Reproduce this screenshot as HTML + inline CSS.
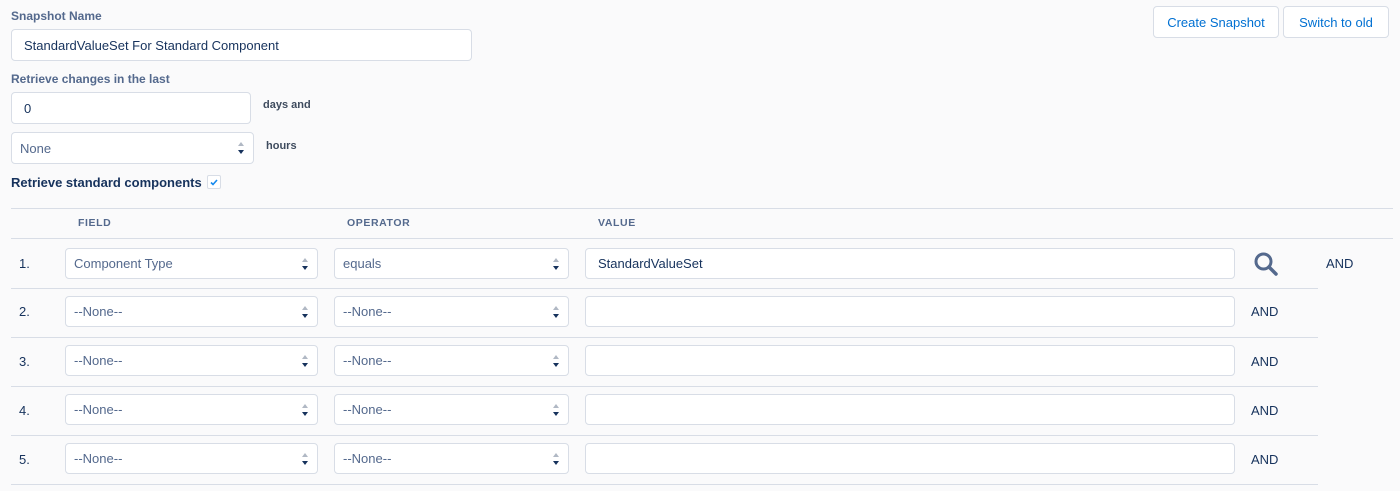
<!DOCTYPE html>
<html><head><style>
body{margin:0;width:1400px;height:491px;background:#fafafb;font-family:"Liberation Sans",sans-serif;color:#16325c;position:relative;overflow:hidden}
.a{position:absolute}
.lbl{font-size:12px;color:#54698d;font-weight:bold}
.inp{position:absolute;background:#fff;border:1px solid #d8dde6;border-radius:4px;box-sizing:border-box;font-size:13px;display:flex;align-items:center;padding-left:12px;color:#16325c}
.sel{color:#54698d;padding-left:8px}
.arr{position:absolute;right:8px;top:50%;margin-top:-7px;width:7px;height:14px}
.arr:before{content:"";position:absolute;left:0;top:1px;border:3.5px solid transparent;border-bottom:4px solid #b0b8c4;border-top:0}
.arr:after{content:"";position:absolute;left:0;top:9px;border:3.5px solid transparent;border-top:4px solid #16325c;border-bottom:0}
.btn{position:absolute;background:#fff;border:1px solid #d8dde6;border-radius:4px;box-sizing:border-box;font-size:13px;color:#0070d2;display:flex;align-items:center;justify-content:center;height:32px;top:6px}
.line{position:absolute;height:1px;background:#d8dde6;left:11px}
.th{position:absolute;top:217px;font-size:10.5px;font-weight:bold;letter-spacing:0.6px;color:#54698d}
.num{position:absolute;left:19px;font-size:13px}
.and{position:absolute;font-size:13px;color:#16325c}
</style></head><body>
<div class="a lbl" style="left:11px;top:9px">Snapshot Name</div>
<div class="inp" style="left:11px;top:29px;width:461px;height:32px">StandardValueSet For Standard Component</div>
<div class="a lbl" style="left:11px;top:72px">Retrieve changes in the last</div>
<div class="inp" style="left:11px;top:92px;width:240px;height:32px">0</div>
<div class="a" style="left:263px;top:99px;font-size:11px;font-weight:bold;color:#3e4b5e">days and</div>
<div class="inp sel" style="left:11px;top:132px;width:243px;height:32px">None<span class="arr"></span></div>
<div class="a" style="left:266px;top:140px;font-size:11px;font-weight:bold;color:#3e4b5e">hours</div>
<div class="a" style="left:11px;top:175px;font-size:13px;font-weight:bold;color:#16325c">Retrieve standard components</div>
<div class="a" style="left:207px;top:175px;width:14px;height:14px;border:1px solid #d8dde6;border-radius:2px;background:#fff;box-sizing:border-box"><svg width="12" height="12" viewBox="0 0 12 12" style="position:absolute;left:0;top:0"><path d="M3 6.5l2 2 4-4.5" stroke="#1589ee" stroke-width="1.6" fill="none"/></svg></div>
<div class="btn" style="left:1153px;width:126px">Create Snapshot</div>
<div class="btn" style="left:1283px;width:106px">Switch to old</div>
<div class="line" style="top:208px;width:1382px"></div>
<div class="th" style="left:78px">FIELD</div>
<div class="th" style="left:347px">OPERATOR</div>
<div class="th" style="left:598px">VALUE</div>
<div class="line" style="top:238px;width:1382px"></div>

<div class="num" style="top:256px">1.</div>
<div class="inp sel" style="left:65px;top:248px;width:253px;height:31px">Component Type<span class="arr"></span></div>
<div class="inp sel" style="left:334px;top:248px;width:235px;height:31px">equals<span class="arr"></span></div>
<div class="inp" style="left:585px;top:248px;width:650px;height:31px">StandardValueSet</div>
<svg class="a" style="left:1252px;top:250px" width="28" height="28" viewBox="0 0 28 28"><circle cx="11.5" cy="11.5" r="7.5" stroke="#54698d" stroke-width="3" fill="none"/><path d="M17 17l7 7" stroke="#54698d" stroke-width="3.5" stroke-linecap="round"/></svg>
<div class="and" style="left:1326px;top:256px">AND</div>
<div class="line" style="top:288px;width:1307px"></div>

<div class="num" style="top:304px">2.</div>
<div class="inp sel" style="left:65px;top:296px;width:253px;height:31px">--None--<span class="arr"></span></div>
<div class="inp sel" style="left:334px;top:296px;width:235px;height:31px">--None--<span class="arr"></span></div>
<div class="inp" style="left:585px;top:296px;width:650px;height:31px"></div>
<div class="and" style="left:1251px;top:304px">AND</div>
<div class="line" style="top:337px;width:1307px"></div>

<div class="num" style="top:354px">3.</div>
<div class="inp sel" style="left:65px;top:345px;width:253px;height:31px">--None--<span class="arr"></span></div>
<div class="inp sel" style="left:334px;top:345px;width:235px;height:31px">--None--<span class="arr"></span></div>
<div class="inp" style="left:585px;top:345px;width:650px;height:31px"></div>
<div class="and" style="left:1251px;top:354px">AND</div>
<div class="line" style="top:386px;width:1307px"></div>

<div class="num" style="top:403px">4.</div>
<div class="inp sel" style="left:65px;top:394px;width:253px;height:31px">--None--<span class="arr"></span></div>
<div class="inp sel" style="left:334px;top:394px;width:235px;height:31px">--None--<span class="arr"></span></div>
<div class="inp" style="left:585px;top:394px;width:650px;height:31px"></div>
<div class="and" style="left:1251px;top:403px">AND</div>
<div class="line" style="top:435px;width:1307px"></div>

<div class="num" style="top:452px">5.</div>
<div class="inp sel" style="left:65px;top:443px;width:253px;height:31px">--None--<span class="arr"></span></div>
<div class="inp sel" style="left:334px;top:443px;width:235px;height:31px">--None--<span class="arr"></span></div>
<div class="inp" style="left:585px;top:443px;width:650px;height:31px"></div>
<div class="and" style="left:1251px;top:452px">AND</div>
<div class="line" style="top:484px;width:1307px"></div>
</body></html>
